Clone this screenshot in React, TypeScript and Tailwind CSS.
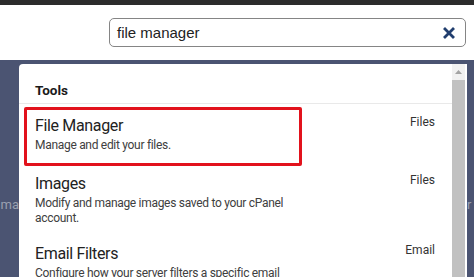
import React from "react";

type Row = {
  title: string;
  desc: string[];
  label: string;
  pb: string;
};

const rows: Row[] = [
  { title: "File Manager", desc: ["Manage and edit your files."], label: "Files", pb: "pb-[9px]" },
  {
    title: "Images",
    desc: ["Modify and manage images saved to your cPanel", "account."],
    label: "Files",
    pb: "pb-[6px]",
  },
  {
    title: "Email Filters",
    desc: ["Configure how your server filters a specific email", "address."],
    label: "Email",
    pb: "pb-[5px]",
  },
];

export default function App() {
  return (
    <div
      className="w-[474px] h-[277px] overflow-hidden bg-white flex flex-col"
      style={{ fontFamily: "Roboto, 'Liberation Sans', sans-serif" }}
    >
      <div className="h-[5px] bg-[#2c2c2c] shrink-0" />
      <div className="h-[55px] shrink-0 bg-white pt-[13px] pl-[109px]">
        <div className="w-[357px] h-[29px] border border-[#858585] rounded-[5px] flex items-center justify-between pl-[7px] pr-[10px]">
          <div
            className="text-[15px] leading-[27px] text-[#222]"
            style={{ fontFamily: "'Liberation Sans', Arial, sans-serif" }}
          >
            file manager
          </div>
          <svg width="12" height="12" viewBox="0 0 12 12" className="mt-[1px]">
            <path d="M2 2 L10 10 M10 2 L2 10" stroke="#213e6e" strokeWidth="2.8" strokeLinecap="square" />
          </svg>
        </div>
      </div>
      <div className="flex-1 flex bg-[#4b5472] min-h-0">
        <div className="w-[19px] shrink-0 overflow-hidden flex justify-end pt-[137px]">
          <div className="text-[13px] leading-[16px] text-[#9aa0b0] whitespace-nowrap">ma</div>
        </div>
        <div className="mt-[4px] w-[448px] shrink-0 bg-white rounded-tl-[4px] flex relative">
          <div className="w-[433px] shrink-0 flex flex-col">
            <div className="pl-[16px] pt-[17px] pb-[4px] border-b border-[#e9e9e9] text-[13.5px] leading-[18px] font-bold text-[#1a1a1a]">
              Tools
            </div>
            {rows.map((r, i) => (
              <div key={i} className={`flex justify-between pl-[16px] pr-[17px] pt-[13px] ${r.pb}`}>
                <div className="flex flex-col">
                  <div className="text-[16px] leading-[18px] tracking-[-0.35px] text-[#222]">{r.title}</div>
                  <div className="mt-[3px] flex flex-col">
                    {r.desc.map((d, j) => (
                      <div
                        key={j}
                        className="text-[12px] leading-[15px] tracking-[-0.3px] text-[#404040] whitespace-nowrap"
                      >
                        {d}
                      </div>
                    ))}
                  </div>
                </div>
                <div className="text-[12px] leading-[15px] text-[#333] -mt-[2px]">{r.label}</div>
              </div>
            ))}
          </div>
          <div className="w-[13px] shrink-0 bg-[#f1f1f1] flex flex-col">
            <div className="h-[16px] flex items-center justify-center">
              <svg width="7" height="4" viewBox="0 0 7 4">
                <path d="M0 4 L3.5 0 L7 4 Z" fill="#a3a3a3" />
              </svg>
            </div>
            <div className="flex-1 bg-[#c1c1c1]" />
          </div>
          <div className="absolute left-[5px] top-[43px] w-[278px] h-[59px] border-[3px] border-[#e2121c] rounded-[2px]" />
        </div>
        <div className="flex-1 overflow-hidden pt-[137px]">
          <div className="text-[13px] leading-[16px] text-[#9aa0b0] whitespace-nowrap">r</div>
        </div>
      </div>
    </div>
  );
}
